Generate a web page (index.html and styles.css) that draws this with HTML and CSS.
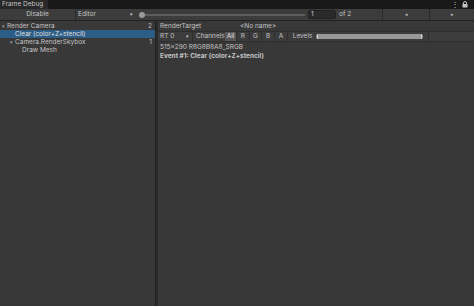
FILE: index.html
```html
<!DOCTYPE html>
<html lang="en">
<head>
  <meta charset="UTF-8">
  <title>Frame Debug</title>
  <link rel="stylesheet" href="styles.css">
</head>
<body>
  <div class="window">
    <div class="tabbar">
      <div class="tab">Frame Debug</div>
      <div class="tab-icons">
        <span class="dots">&#8942;</span>
        <svg class="lock" width="6" height="7" viewBox="0 0 6 7"><rect x="0.5" y="3" width="5" height="3.5" fill="#c4c4c4"/><path d="M1.5 3V2a1.5 1.5 0 0 1 3 0v1" stroke="#c4c4c4" fill="none"/></svg>
      </div>
    </div>

    <div class="toolbar">
      <div class="tb-button disable">Disable</div>
      <div class="tb-dropdown">Editor<span class="caret">&#9662;</span></div>
      <div class="tb-slider"><span class="thumb"></span><span class="track"></span></div>
      <div class="tb-field">1</div>
      <div class="tb-of">of 2</div>
      <div class="tb-nav"><span class="arrow">&#9666;</span></div>
      <div class="tb-nav last"><span class="arrow">&#9656;</span></div>
    </div>

    <div class="body">
      <div class="tree">
        <div class="row"><span class="fold">&#9662;</span><span class="label">Render Camera</span><span class="count">2</span></div>
        <div class="row selected indent1"><span class="label">Clear (color+Z+stencil)</span></div>
        <div class="row indent1"><span class="fold">&#9662;</span><span class="label">Camera.RenderSkybox</span><span class="count">1</span></div>
        <div class="row indent2"><span class="label">Draw Mesh</span></div>
      </div>
      <div class="split"></div>
      <div class="details">
        <div class="prop">
          <span class="prop-name">RenderTarget</span>
          <span class="prop-value">&lt;No name&gt;</span>
        </div>
        <div class="rt-bar">
          <div class="rt-drop">RT 0<span class="caret">&#9662;</span></div>
          <span class="rt-label channels">Channels</span>
          <span class="ch on">All</span>
          <span class="ch">R</span>
          <span class="ch">G</span>
          <span class="ch">B</span>
          <span class="ch">A</span>
          <span class="rt-label levels">Levels</span>
          <div class="levels-bar"><span class="knob"></span><span class="knob"></span></div>
          <div class="rt-rest"></div>
        </div>
        <div class="info">515x290 R8G8B8A8_SRGB</div>
        <div class="info event">Event #1: Clear (color+Z+stencil)</div>
      </div>
    </div>
  </div>
</body>
</html>
```

FILE: styles.css
```css
* {
  box-sizing: border-box;
}

body {
  margin: 0;
  background: #383838;
  font-family: Inter, 'Noto Sans', sans-serif;
  font-size: 6.5px;
  color: #c4c4c4;
}

.window {
  width: 474px;
  height: 306px;
  display: flex;
  flex-direction: column;
  overflow: hidden;
  white-space: nowrap;
}

.tabbar {
  height: 9px;
  background: #191919;
  display: flex;
  justify-content: space-between;
  flex: none;
}

.tab {
  width: 48px;
  padding-left: 2px;
  background: #282828;
  line-height: 9px;
}

.tab-icons {
  display: flex;
  align-items: center;
  gap: 3px;
  padding-right: 6px;
}

.dots {
  font-size: 8px;
  line-height: 9px;
}

.toolbar {
  height: 12px;
  flex: none;
  background: #3c3c3c;
  border-bottom: 1px solid #232323;
  display: flex;
  align-items: stretch;
  line-height: 11px;
}

.tb-button {
  width: 76px;
  text-align: center;
  border-right: 1px solid #2a2a2a;
}

.tb-dropdown {
  width: 60px;
  padding-left: 2px;
  display: flex;
  justify-content: space-between;
}

.caret {
  font-size: 5px;
  padding-right: 3px;
}

.tb-slider {
  width: 169px;
  display: flex;
  align-items: center;
  padding-left: 3px;
}

.thumb {
  width: 6px;
  height: 6px;
  border-radius: 50%;
  background: #999;
  flex: none;
}

.track {
  flex: 1;
  height: 2px;
  background: #5e5e5e;
}

.tb-field {
  width: 28px;
  margin: 1px 0 1px 3px;
  background: #2a2a2a;
  border: 1px solid #212121;
  border-radius: 2px;
  line-height: 7px;
  padding-left: 2px;
  color: #d2d2d2;
}

.tb-of {
  width: 47px;
  padding-left: 3px;
  border-right: 1px solid #2a2a2a;
}

.tb-nav {
  width: 47px;
  text-align: center;
  border-right: 1px solid #2a2a2a;
  font-size: 5px;
}

.tb-nav.last {
  flex: 1;
  border-right: none;
}

.body {
  flex: 1;
  display: flex;
}

.tree {
  width: 155px;
  padding-top: 1px;
}

.row {
  height: 8px;
  line-height: 8px;
  display: flex;
  padding-left: 7px;
  position: relative;
}

.row .fold {
  position: absolute;
  margin-left: -5px;
  font-size: 5px;
  color: #a0a0a0;
}

.row .label {
  flex: 1;
}

.row .count {
  padding-right: 3px;
}

.row.indent1 {
  padding-left: 15px;
}

.row.indent2 {
  padding-left: 22px;
}

.row.selected {
  background: #2c5d87;
  color: #e0e0e0;
}

.split {
  width: 3px;
  background: #2a2a2a;
  border-left: 1px solid #232323;
}

.details {
  flex: 1;
  padding-top: 1px;
}

.prop {
  height: 8px;
  line-height: 8px;
  padding-left: 2px;
  display: flex;
}

.prop-name {
  width: 80px;
}

.rt-bar {
  height: 11px;
  margin-top: 1px;
  background: #3c3c3c;
  border-top: 1px solid #2e2e2e;
  border-bottom: 1px solid #2e2e2e;
  display: flex;
  align-items: center;
  line-height: 9px;
}

.rt-drop {
  width: 35px;
  padding-left: 2px;
  display: flex;
  justify-content: space-between;
  border-right: 1px solid #2e2e2e;
}

.rt-label {
  padding-left: 3px;
}

.rt-label.channels {
  width: 32px;
}

.ch {
  width: 12.7px;
  text-align: center;
  border-right: 1px solid #2e2e2e;
}

.ch.on {
  width: 12px;
  background: #585858;
  color: #e0e0e0;
}

.rt-label.levels {
  width: 28px;
  padding-left: 5px;
}

.levels-bar {
  width: 107px;
  height: 5px;
  background: #999;
  border-radius: 3px;
  display: flex;
  justify-content: space-between;
  align-items: center;
  padding: 0 1px;
}

.knob {
  width: 1px;
  height: 5px;
  background: #c8c8c8;
}

.rt-rest {
  flex: 1;
  align-self: stretch;
  margin-left: 5px;
  border-left: 1px solid #2e2e2e;
}

.info {
  height: 9px;
  line-height: 9px;
  padding-left: 2px;
  margin-top: 1px;
}

.info.event {
  margin-top: 0;
  font-weight: bold;
}
```
